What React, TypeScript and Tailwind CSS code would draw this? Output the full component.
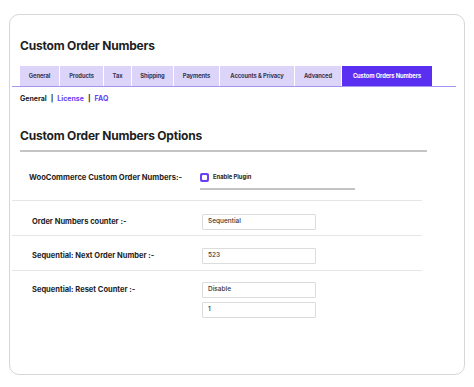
import React from "react";

const tabs = [
  { label: "General", w: 39 },
  { label: "Products", w: 43 },
  { label: "Tax", w: 27 },
  { label: "Shipping", w: 41 },
  { label: "Payments", w: 45 },
  { label: "Accounts & Privacy", w: 74 },
  { label: "Advanced", w: 46 },
];

function Input({ value }: { value: string }) {
  return (
    <div className="w-[114px] h-[16px] border border-[#dcdcdc] rounded-[1px] bg-white flex items-center pl-[5px] text-[6.5px] font-medium text-[#333]">
      {value}
    </div>
  );
}

export default function App() {
  return (
    <div className="w-[474px] h-[387px] bg-white pt-[14px] pl-[9px]" style={{ fontFamily: "Inter, 'Liberation Sans', sans-serif" }}>
      <div className="w-[456px] h-[361px] border border-[#d6d6d6] rounded-[10px] bg-white">
        <h1 className="ml-[10px] mt-[23px] text-[12px] leading-[16px] font-bold text-[#1e1e1e] tracking-[-0.2px]">
          Custom Order Numbers
        </h1>
        <div className="ml-[2px] mt-[12px] w-[444px] border-b border-[#a594f2] pl-[8px] flex gap-[1px]">
          {tabs.map((t) => (
            <div
              key={t.label}
              className="h-[20px] bg-[#dcd5f9] flex items-center justify-center text-[5.8px] font-bold text-[#3a3555] tracking-[-0.1px]"
              style={{ width: t.w }}
            >
              {t.label}
            </div>
          ))}
          <div className="h-[20px] w-[90px] bg-[#5b2ff2] flex items-center justify-center text-[5.8px] font-bold text-white tracking-[-0.1px]">
            Custom Orders Numbers
          </div>
        </div>
        <div className="ml-[10px] mt-[7px] text-[7px] leading-[10px] font-bold text-[#1e1e1e] flex gap-[4px]">
          <span>General</span>
          <span>|</span>
          <span className="text-[#6a42f5]">License</span>
          <span>|</span>
          <span className="text-[#6a42f5]">FAQ</span>
        </div>
        <h2 className="ml-[10px] mt-[24px] text-[12px] leading-[16px] font-bold text-[#1e1e1e] tracking-[-0.2px]">
          Custom Order Numbers Options
        </h2>
        <div className="ml-[10px] mt-[6px] w-[407px] h-[2px] bg-[#c4c4c4]" />
        <div className="ml-[2px] w-[410px] h-[49px] border-b border-[#e6e6e6] flex pt-[21px]">
          <div className="ml-[17px] w-[171px] text-[7.6px] leading-[10px] font-bold text-[#1e1e1e]">
            WooCommerce Custom Order Numbers:-
          </div>
          <div className="flex flex-col">
            <div className="flex items-center gap-[4px]">
              <div className="w-[9px] h-[9px] rounded-[2px] bg-[#6a3ef3] flex items-center justify-center">
                <div className="w-[5px] h-[5px] bg-white rounded-[1px]" />
              </div>
              <span className="text-[5.8px] font-bold text-[#1e1e1e]">Enable Plugin</span>
            </div>
            <div className="mt-[6px] w-[155px] h-[2px] bg-[#c4c4c4]" />
          </div>
        </div>
        <div className="ml-[2px] w-[410px] h-[35px] border-b border-[#e6e6e6] flex pt-[13px]">
          <div className="ml-[20px] w-[170px] pt-[3px] text-[7.5px] leading-[10px] font-bold text-[#1e1e1e]">
            Order Numbers counter :-
          </div>
          <Input value="Sequential" />
        </div>
        <div className="ml-[2px] w-[410px] h-[35px] border-b border-[#e6e6e6] flex pt-[12px]">
          <div className="ml-[20px] w-[170px] pt-[3px] text-[7.5px] leading-[10px] font-bold text-[#1e1e1e]">
            Sequential: Next Order Number :-
          </div>
          <Input value="523" />
        </div>
        <div className="ml-[2px] w-[410px] flex pt-[11px]">
          <div className="ml-[20px] w-[170px] pt-[3px] text-[7.5px] leading-[10px] font-bold text-[#1e1e1e]">
            Sequential: Reset Counter :-
          </div>
          <div className="flex flex-col gap-[4px]">
            <Input value="Disable" />
            <Input value="1" />
          </div>
        </div>
      </div>
    </div>
  );
}
